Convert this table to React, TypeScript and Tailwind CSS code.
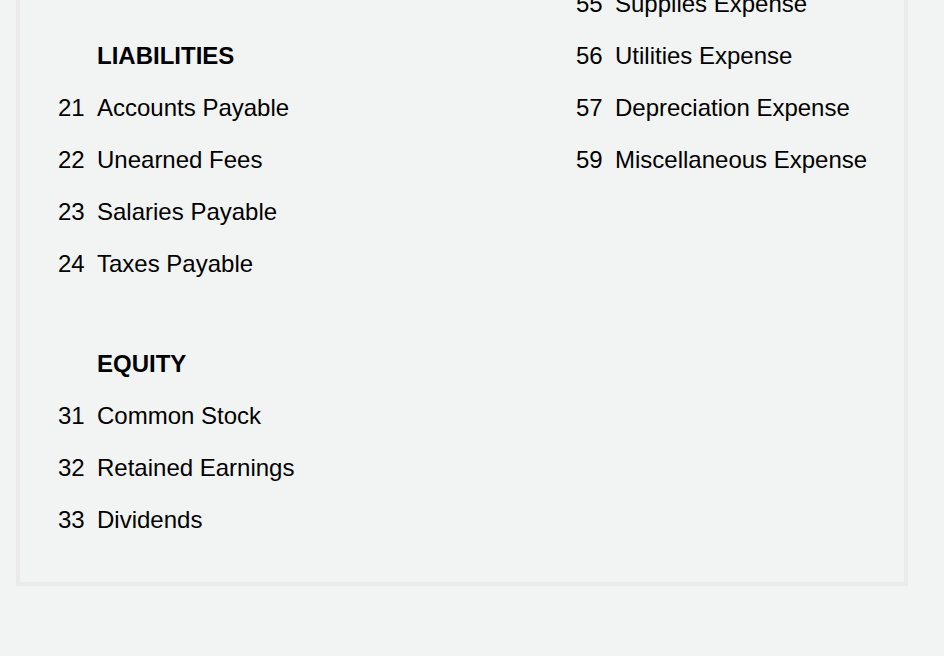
const LIABILITIES = [
  { no: '21', name: 'Accounts Payable' },
  { no: '22', name: 'Unearned Fees' },
  { no: '23', name: 'Salaries Payable' },
  { no: '24', name: 'Taxes Payable' },
];

const EQUITY = [
  { no: '31', name: 'Common Stock' },
  { no: '32', name: 'Retained Earnings' },
  { no: '33', name: 'Dividends' },
];

const EXPENSES = [
  { no: '55', name: 'Supplies Expense' },
  { no: '56', name: 'Utilities Expense' },
  { no: '57', name: 'Depreciation Expense' },
  { no: '59', name: 'Miscellaneous Expense' },
];

function Row({ no, name }: { no: string; name: string }) {
  return (
    <div className="flex h-[52px] items-center">
      <span className="w-[39px] shrink-0">{no}</span>
      <span>{name}</span>
    </div>
  );
}

function Heading({ label }: { label: string }) {
  return (
    <div className="flex h-[52px] items-center pl-[39px] font-bold">{label}</div>
  );
}

export default function App() {
  return (
    <div
      className="min-h-[656px] overflow-hidden bg-[#f2f4f3] text-[24px] text-black"
      style={{ fontFamily: '"Liberation Sans", Arial, sans-serif' }}
    >
      <div className="-mt-[64px] ml-4 w-[892px] border-4 border-[#e9eae9] pt-[38px] pb-[36px] pl-[38px]">
        <div className="grid grid-cols-[518px_1fr]">
          {/* left: liabilities + equity */}
          <div>
            <div className="h-[52px]" />
            <Heading label="LIABILITIES" />
            {LIABILITIES.map((r) => (
              <Row key={r.no} {...r} />
            ))}
            <div className="h-[48px]" />
            <Heading label="EQUITY" />
            {EQUITY.map((r) => (
              <Row key={r.no} {...r} />
            ))}
          </div>

          {/* right: expenses */}
          <div>
            {EXPENSES.map((r) => (
              <Row key={r.no} {...r} />
            ))}
          </div>
        </div>
      </div>
    </div>
  );
}
